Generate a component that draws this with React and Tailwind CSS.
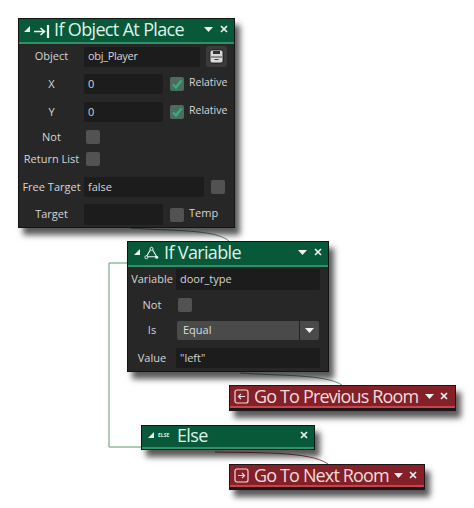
const font = { fontFamily: '"Open Sans", sans-serif' };

function Collapse() {
  return (
    <svg width="8" height="8" viewBox="0 0 8 8" className="shrink-0">
      <path d="M7 1V7H1Z" fill="#e8f0ec" />
    </svg>
  );
}

function MenuArrow({ className = "" }) {
  return (
    <svg width="9" height="5" viewBox="0 0 9 5" className={`shrink-0 ${className}`}>
      <path d="M0 0H9L4.5 5Z" fill="#eef2f0" />
    </svg>
  );
}

function Close({ className = "" }) {
  return (
    <svg width="8" height="8" viewBox="0 0 8 8" className={`shrink-0 ${className}`}>
      <path d="M1 1L7 7M7 1L1 7" stroke="#eef2f0" strokeWidth="1.7" />
    </svg>
  );
}

function Input({ value, className = "" }) {
  return (
    <div className={`flex items-center rounded-[2px] bg-[#1c1c1c] pl-[4px] text-[11px] text-[#d4d4d4] ${className}`}>
      {value}
    </div>
  );
}

function Check({ checked, className = "" }) {
  return (
    <div className={`flex size-[14px] shrink-0 items-center justify-center rounded-[2px] ${checked ? "bg-[#4f6b5e]" : "bg-[#525252]"} ${className}`}>
      {checked && (
        <svg width="12" height="12" viewBox="0 0 12 12">
          <path d="M2 6.5L5 9.5L10.5 2.5" fill="none" stroke="#2bb37e" strokeWidth="2.2" />
        </svg>
      )}
    </div>
  );
}

function Label({ children, width }) {
  return <div className={`shrink-0 text-center text-[11px] text-[#d6d6d6] ${width}`}>{children}</div>;
}

function Row({ label, width, className = "", children }) {
  return (
    <div className={`flex items-center ${className}`}>
      <Label width={width}>{label}</Label>
      {children}
    </div>
  );
}

function GreenHeader({ icon, title, menu = true, className = "h-[25px]", gapClass = "gap-[4px]" }) {
  return (
    <div className={`flex items-center border-b-2 border-[#2e9268] bg-[#08593a] pb-[3px] pr-[6px] ${className}`}>
      <Collapse />
      <div className={`ml-[3px] flex min-w-0 flex-1 items-center whitespace-nowrap ${gapClass}`}>
        {icon}
        <span className="text-[18px] leading-none tracking-[-0.65px] text-[#dff0e8]">{title}</span>
      </div>
      {menu && <MenuArrow className="mr-[7px]" />}
      <Close />
    </div>
  );
}

function RedBlock({ direction, title, className }) {
  return (
    <div className={`absolute flex h-[26px] items-center border border-b-[3px] border-[#1d1618] bg-[#842027] pb-[2px] pl-[4px] pr-[7px] shadow-[inset_0_-2px_0_#c8444a,5px_7px_6px_rgba(0,0,0,0.65)] ${className}`}>
      <svg width="15" height="15" viewBox="0 0 15 15" className="shrink-0">
        <rect x="1" y="1" width="13" height="13" rx="2" fill="none" stroke="#f0dcdc" strokeWidth="1.2" />
        {direction === "left" ? (
          <path d="M11 7.5H4.5M7 5L4.5 7.5L7 10" fill="none" stroke="#f0dcdc" strokeWidth="1.2" />
        ) : (
          <path d="M4 7.5H10.5M8 5L10.5 7.5L8 10" fill="none" stroke="#f0dcdc" strokeWidth="1.2" />
        )}
      </svg>
      <span className="ml-[5px] flex-1 whitespace-nowrap text-[18px] leading-none tracking-[-0.85px] text-[#f0dcdc]">{title}</span>
      <MenuArrow className="mr-[6px]" />
      <Close />
    </div>
  );
}

export default function App() {
  return (
    <div className="relative h-[508px] w-[474px] overflow-hidden bg-white" style={font}>
      {/* connectors between the blocks */}
      <svg width="474" height="508" className="absolute left-0 top-0">
        <path d="M127 263H109V447H141" fill="none" stroke="#5d9a72" strokeWidth="1" />
        <path d="M130 228C170 231 215 229 229 241" fill="none" stroke="#5d9a72" strokeWidth="1" />
        <path d="M240 373C280 376 325 374 342 385" fill="none" stroke="#5d9a72" strokeWidth="1" />
        <path d="M215 452C255 453 310 451 328 464" fill="none" stroke="#a8474c" strokeWidth="1" />
      </svg>

      {/* If Object At Place */}
      <div className="absolute left-[18px] top-[18px] h-[210px] w-[217px] border border-[#141414] bg-[#272727] shadow-[5px_7px_6px_rgba(0,0,0,0.65)]">
        <GreenHeader
          title="If Object At Place"
          className="h-[25px] pl-[4px]"
          icon={
            <svg width="16" height="14" viewBox="0 0 16 14" className="mt-[3px] shrink-0">
              <path d="M0 7.5H10M6.5 4L10.5 7.5L6.5 11" fill="none" stroke="#eef5f1" strokeWidth="1.6" />
              <path d="M14 1V14" stroke="#eef5f1" strokeWidth="2.2" />
            </svg>
          }
        />
        <div className="flex flex-col">
          <Row label="Object" width="w-[65px]" className="mt-[2px]">
            <Input value="obj_Player" className="h-[20px] w-[116px] tracking-[-0.3px]" />
            <div className="ml-[6px] flex size-[21px] items-center justify-center rounded-[3px] bg-[#3b3b3b]">
              <svg width="15" height="15" viewBox="0 0 15 15">
                <rect x="1" y="1" width="13" height="13" rx="2" fill="#d8d8d8" stroke="#111" strokeWidth="0.8" />
                <rect x="4" y="2" width="7" height="3" fill="#333" />
                <path d="M2 8H13M5.5 10.5H9.5" stroke="#444" strokeWidth="1" />
              </svg>
            </div>
          </Row>
          <Row label="X" width="w-[65px]" className="mt-[7px]">
            <Input value="0" className="h-[20px] w-[79px]" />
            <Check checked className="ml-[7px]" />
            <span className="ml-[5px] -mt-[2px] text-[10.5px] text-[#d6d6d6]">Relative</span>
          </Row>
          <Row label="Y" width="w-[65px]" className="mt-[8px]">
            <Input value="0" className="h-[20px] w-[79px]" />
            <Check checked className="ml-[7px]" />
            <span className="ml-[5px] -mt-[2px] text-[10.5px] text-[#d6d6d6]">Relative</span>
          </Row>
          <Row label="Not" width="w-[65px]" className="mt-[8px] h-[14px]">
            <Check className="ml-[2px]" />
          </Row>
          <Row label="Return List" width="w-[65px]" className="mt-[8px] h-[14px]">
            <Check className="ml-[2px]" />
          </Row>
          <Row label="Free Target" width="w-[65px]" className="mt-[11px]">
            <Input value="false" className="h-[20px] w-[120px]" />
            <Check className="ml-[7px]" />
          </Row>
          <Row label="Target" width="w-[65px]" className="mt-[7px]">
            <Input value="" className="h-[21px] w-[79px]" />
            <Check className="ml-[7px]" />
            <span className="ml-[5px] -mt-[3px] text-[11px] text-[#d6d6d6]">Temp</span>
          </Row>
        </div>
      </div>

      {/* If Variable */}
      <div className="absolute left-[127px] top-[241px] h-[131px] w-[202px] border border-[#141414] bg-[#272727] shadow-[5px_7px_6px_rgba(0,0,0,0.65)]">
        <GreenHeader
          title="If Variable"
          className="h-[25px] pl-[5px]"
          gapClass="gap-[5px]"
          icon={
            <svg width="15" height="15" viewBox="0 0 16 16" className="mt-[3px] shrink-0">
              <path d="M8 2L2.5 11.5H13.5Z" fill="none" stroke="#eef5f1" strokeWidth="1.1" />
              <circle cx="8" cy="3" r="1.6" fill="#08593a" stroke="#eef5f1" />
              <circle cx="2.5" cy="12" r="1.6" fill="#08593a" stroke="#eef5f1" />
              <circle cx="13.5" cy="12" r="1.6" fill="#eef5f1" />
            </svg>
          }
        />
        <div className="flex flex-col">
          <Row label="Variable" width="w-[48px]" className="mt-[2px]">
            <Input value="door_type" className="h-[21px] w-[144px]" />
          </Row>
          <Row label="Not" width="w-[48px]" className="mt-[8px] h-[14px]">
            <Check className="ml-[2px]" />
          </Row>
          <Row label="Is" width="w-[48px]" className="mt-[9px]">
            <div className="ml-[1px] flex h-[19px] w-[142px] items-center rounded-[2px] bg-[#4a4a4a] text-[11px] text-[#dcdcdc]">
              <span className="flex-1 pl-[6px]">Equal</span>
              <div className="flex h-full w-[20px] items-center justify-center border-l border-[#222]">
                <MenuArrow />
              </div>
            </div>
          </Row>
          <Row label="Value" width="w-[48px]" className="mt-[8px]">
            <Input value={'"left"'} className="h-[20px] w-[144px]" />
          </Row>
        </div>
      </div>

      <RedBlock direction="left" title="Go To Previous Room" className="left-[229px] top-[385px] w-[227px]" />

      {/* Else */}
      <div className="absolute left-[141px] top-[425px] w-[174px] border border-[#141414] shadow-[5px_7px_6px_rgba(0,0,0,0.65)]">
        <GreenHeader
          title="Else"
          menu={false}
          className="h-[23px] pl-[5px]"
          gapClass="gap-[6px]"
          icon={<span className="w-[13px] text-[5px] font-bold leading-none text-[#dff0e8]">ELSE</span>}
        />
      </div>

      <RedBlock direction="right" title="Go To Next Room" className="left-[229px] top-[464px] w-[196px]" />
    </div>
  );
}
